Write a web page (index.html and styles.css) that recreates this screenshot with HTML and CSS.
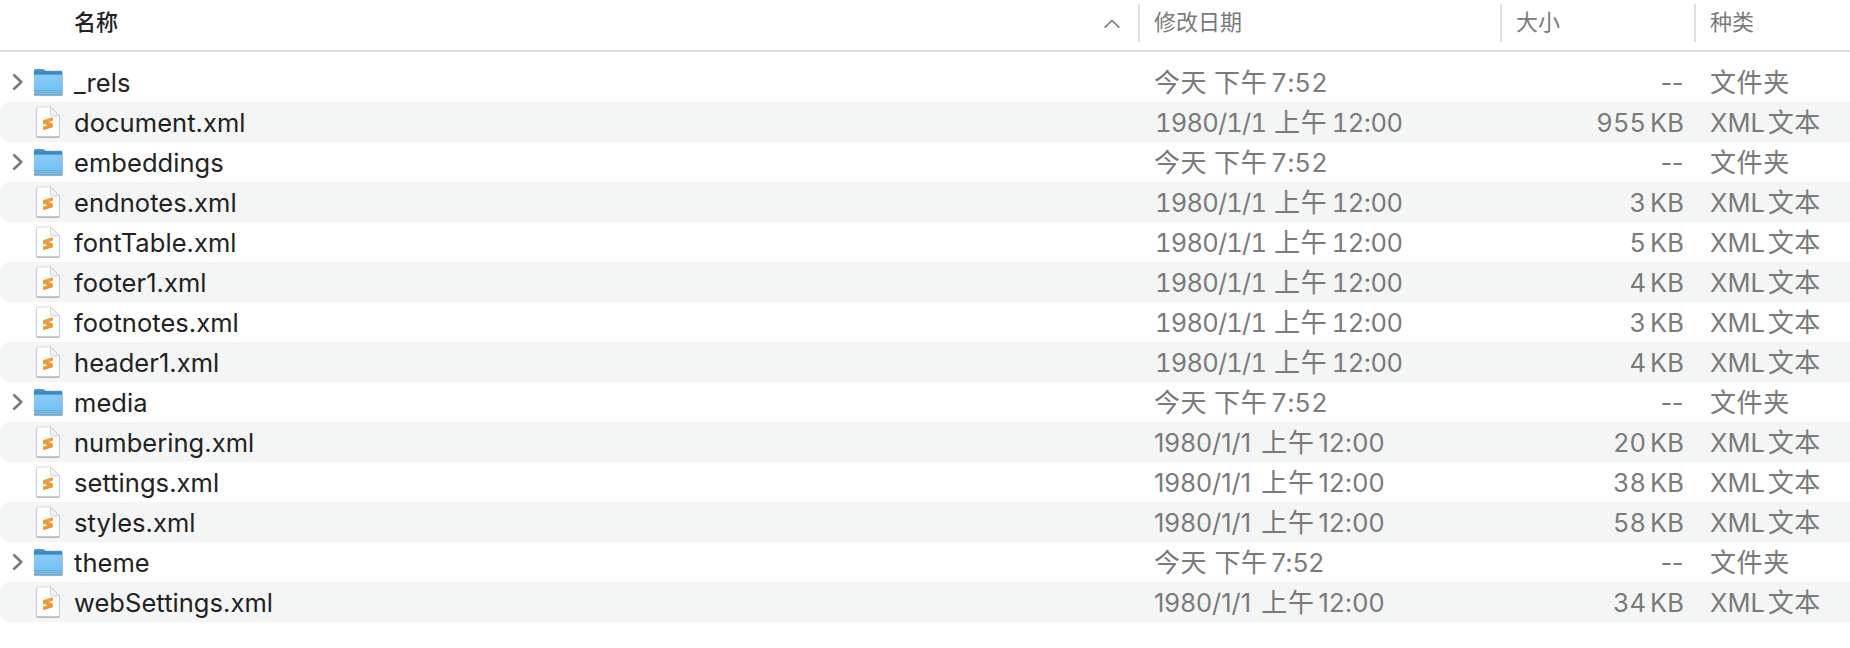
FILE: index.html
```html
<!DOCTYPE html>
<html lang="zh-CN">
<head>
    <meta charset="UTF-8">
    <meta name="viewport" content="width=device-width, initial-scale=1.0">
    <title>Files</title>
    <link rel="stylesheet" href="styles.css">
</head>
<body>

<!-- Shared icons -->
<svg class="defs" width="0" height="0">
    <defs>
        <linearGradient id="folderBack" x1="0" y1="0" x2="0" y2="1">
            <stop offset="0" stop-color="#4a9bd8"/>
            <stop offset="0.25" stop-color="#3279bb"/>
        </linearGradient>
        <linearGradient id="folderFront" x1="0" y1="0" x2="0" y2="1">
            <stop offset="0" stop-color="#84cdf8"/>
            <stop offset="1" stop-color="#74bff0"/>
        </linearGradient>
    </defs>
    <symbol id="folder" viewBox="0 0 32 32">
        <path d="M2 29V4.500Q2 3 3.500 3H10.500Q11.500 3 12.500 3.800L13 4.200Q13.800 4.800 15 4.800H29Q30.300 4.800 30.300 6V29Z" fill="url(#folderBack)"/>
        <path d="M2 10Q2 8.600 3.400 8.600H28.900Q30.300 8.600 30.300 10V27.700Q30.300 29 29 29H3.300Q2 29 2 27.700Z" fill="url(#folderFront)"/>
        <path d="M2.500 24.400H29.800M2.500 26.300H29.800" stroke="#5eaade" stroke-width="0.800"/>
        <path d="M2.500 28.700H29.800" stroke="#579ecf" stroke-width="0.700"/>
    </symbol>
    <symbol id="file" viewBox="0 0 32 32">
        <path d="M5.700 1H18.300L27.500 9.700V29.200Q27.500 30.500 26.200 30.500H5.700Q4.400 30.500 4.400 29.200V2.300Q4.400 1 5.700 1Z" fill="#fff" stroke="#c6c6c6" stroke-width="0.700"/>
        <path d="M18.500 1.200V7.700Q18.500 9.600 20.300 9.600H27.200Z" fill="#f6f6f6" stroke="#c9c9c9" stroke-width="0.900"/>
        <path d="M20.900 11.200V14.600L16.500 16.100L20.200 17.200Q20.900 17.500 20.900 18.200V20.700Q20.900 21.200 20.300 21.400L11 24.300V20.700L15.400 19.300L11.700 18.100Q11 17.900 11 17.200V14.800Q11 14.200 11.600 14Z" fill="#f09a37"/>
    </symbol>
    <symbol id="arrow" viewBox="0 0 12 18">
        <path d="M2.200 2.200L9.300 9L2.200 15.800" fill="none" stroke="#7d7d7d" stroke-width="2.700" stroke-linecap="round" stroke-linejoin="round"/>
    </symbol>
</svg>

<div class="header">
    <div class="col-name">名称
        <svg class="sort" viewBox="0 0 16 10"><path d="M1.200 8.200L8 1.500L14.800 8.200" fill="none" stroke="#7d7d7d" stroke-width="1.700" stroke-linecap="round" stroke-linejoin="round"/></svg>
    </div>
    <div class="col">修改日期</div>
    <div class="col">大小</div>
    <div class="col">种类</div>
</div>

<div class="list" id="list"></div>

<script src="script.js"></script>
</body>
</html>
```

FILE: styles.css
```css
body {
    margin: 0;
    background: #fff;
    color: #222;
    font-family: Inter, "Noto Sans CJK SC", sans-serif;
    font-size: 25.5px;
    overflow: hidden;
}
.defs {
    display: block;
}
.header, .row {
    display: grid;
    grid-template-columns: 1138px 362px 194px 156px;
}
.header {
    height: 50px;
    border-bottom: 2px solid #dcdcdc;
    font-size: 22px;
    color: #7a7a7a;
}
.header > div {
    box-sizing: border-box;
    height: 38px;
    margin-top: 4px;
    line-height: 36px;
}
.col {
    border-left: 2px solid #e0e0e0;
    padding-left: 14px;
}
.header .col-name {
    display: flex;
    align-items: center;
    justify-content: space-between;
    padding: 0 18px 2px 74px;
    color: #222;
    font-weight: 500;
}
.sort {
    width: 16px;
    height: 10px;
    margin-top: 3px;
}
.list {
    padding-top: 10px;
}
.row {
    height: 40px;
    line-height: 42px;
    white-space: pre;
    color: #7a7a7a;
}
.row:nth-child(even) {
    background: #f4f5f5;
    border-radius: 10px 0 0 10px;
}
.name {
    display: flex;
    align-items: center;
    height: 40px;
    color: #222;
    letter-spacing: 0.05px;
}
.label {
    padding-top: 2px;
}
.arrow {
    width: 12px;
    height: 18px;
    margin-left: 12px;
}
.icon {
    width: 32px;
    height: 32px;
    margin: 0 10px 0 8px;
    filter: drop-shadow(0 1px 0.5px rgba(0, 0, 0, 0.3));
}
.date {
    padding-left: 16px;
}
.size {
    padding-right: 10px;
    text-align: right;
    letter-spacing: 0.1px;
}
.kind {
    padding-left: 16px;
}
.tabular .date, .amount {
    font-feature-settings: "tnum";
}
.cjk {
    font-size: 26px;
    letter-spacing: 0.6px;
}
.day {
    margin-right: 3px;
}
.time {
    word-spacing: -3.5px;
    letter-spacing: 0.2px;
}
.tabular .day {
    margin: 0 1px 0 1px;
    letter-spacing: -0.8px;
}
.tabular .day ~ .time {
    word-spacing: -2px;
    letter-spacing: -0.4px;
}
.unit {
    word-spacing: -3.5px;
}
.text {
    word-spacing: -5px;
}
.empty {
    padding-right: 1px;
    letter-spacing: -0.5px;
}
```

FILE: script.js
```js
// name, date, time, size; folders have no size
const files = [
    ['_rels', '今天', '下午', '7:52', ''],
    ['document.xml', '1980/1/1', '上午', '12:00', '955'],
    ['embeddings', '今天', '下午', '7:52', ''],
    ['endnotes.xml', '1980/1/1', '上午', '12:00', '3'],
    ['fontTable.xml', '1980/1/1', '上午', '12:00', '5'],
    ['footer1.xml', '1980/1/1', '上午', '12:00', '4'],
    ['footnotes.xml', '1980/1/1', '上午', '12:00', '3'],
    ['header1.xml', '1980/1/1', '上午', '12:00', '4'],
    ['media', '今天', '下午', '7:52', ''],
    ['numbering.xml', '1980/1/1', '上午', '12:00', '20'],
    ['settings.xml', '1980/1/1', '上午', '12:00', '38'],
    ['styles.xml', '1980/1/1', '上午', '12:00', '58'],
    ['theme', '今天', '下午', '7:52', ''],
    ['webSettings.xml', '1980/1/1', '上午', '12:00', '34']
];

document.getElementById('list').innerHTML = files.map(([name, day, half, time, size], i) => {
    const folder = size === '';
    return `<div class="row ${i < 9 ? 'tabular' : ''}">` +
        `<div class="name"><svg class="arrow">${folder ? '<use href="#arrow"/>' : ''}</svg>` +
        `<svg class="icon"><use href="#${folder ? 'folder' : 'file'}"/></svg><span class="label">${name}</span></div>` +
        `<div class="date"><span class="${folder ? 'cjk' : 'day'}">${day}</span> <span class="cjk">${half}</span><span class="time"> ${time}</span></div>` +
        `<div class="size">${folder ? '<span class="empty">--</span>' : `<span class="amount">${size}</span><span class="unit"> KB</span>`}</div>` +
        `<div class="kind">${folder ? '<span class="cjk">文件夹</span>' : 'XML<span class="cjk text"> 文本</span>'}</div>` +
        `</div>`;
}).join('');
```
